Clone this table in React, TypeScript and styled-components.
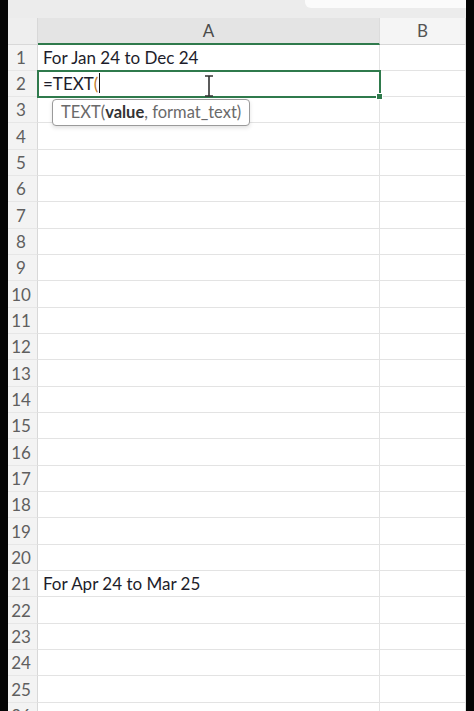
import styled, { createGlobalStyle } from "styled-components";

const GlobalStyle = createGlobalStyle`
  html, body {
    margin: 0;
    padding: 0;
    background: #000;
  }
`;

const ROW_H = 26.33;
const rows = Array.from({ length: 26 }, (_, i) => i + 1);

const Frame = styled.div`
  display: flex;
  width: 474px;
  height: 711px;
  overflow: hidden;
  background: #000;
  font-family: Lato, "Open Sans", sans-serif;
`;

const SideBar = styled.div`
  width: 8px;
  flex: none;
  background: #050505;
`;

const Main = styled.div`
  flex: 1;
  display: flex;
  flex-direction: column;
  background: #fff;
  overflow: hidden;
`;

const TopStrip = styled.div`
  height: 18px;
  flex: none;
  background: #ececec;
  display: flex;
  justify-content: flex-end;
`;

const Tab = styled.div`
  width: 161px;
  height: 8px;
  background: #fbfbfb;
  border-bottom-left-radius: 6px;
`;

const Grid = styled.div`
  display: grid;
  grid-template-columns: 30px 342px 86px;
  grid-auto-rows: ${ROW_H}px;
  grid-template-rows: 26.5px;
`;

const Corner = styled.div`
  background: #eeeeee;
  border-right: 1px solid #d8d8d8;
  border-bottom: 1px solid #d8d8d8;
`;

const ColHead = styled.div<{ $active?: boolean }>`
  display: flex;
  align-items: center;
  justify-content: center;
  background: ${(p) => (p.$active ? "#e4e4e4" : "#f5f5f5")};
  color: ${(p) => (p.$active ? "#4a4a4a" : "#555")};
  font-size: 17px;
  border-right: 1px solid #dcdcdc;
  border-bottom: ${(p) => (p.$active ? "2px solid #2f7a4c" : "1px solid #d8d8d8")};
  box-sizing: border-box;
`;

const RowHead = styled.div`
  display: flex;
  align-items: center;
  justify-content: center;
  padding-right: 3px;
  background: #f3f3f3;
  color: #5f5f5f;
  font-size: 17px;
  border-right: 1px solid #d8d8d8;
  border-bottom: 1px solid #e6e6e6;
  box-sizing: border-box;
`;

const Cell = styled.div<{ $selected?: boolean }>`
  position: relative;
  display: flex;
  align-items: center;
  padding-left: 5px;
  font-size: 17px;
  color: #1d1d2b;
  white-space: nowrap;
  border-right: 1px solid #e3e3e3;
  border-bottom: 1px solid #e3e3e3;
  box-sizing: border-box;
  ${(p) =>
    p.$selected &&
    `
    outline: 2px solid #2f7a4c;
    outline-offset: -1px;
    z-index: 2;
  `}
`;

const Paren = styled.span`
  color: #c07a2a;
`;

const Caret = styled.span`
  display: inline-block;
  width: 1px;
  height: 20px;
  background: #111;
  margin-left: 1px;
`;

const FillHandle = styled.span`
  position: absolute;
  right: -4px;
  bottom: -4px;
  width: 5px;
  height: 5px;
  background: #2f7a4c;
  border: 1px solid #fff;
`;

const IBeam = styled.svg`
  position: absolute;
  left: 166px;
  top: 4px;
  z-index: 4;
`;

const Tooltip = styled.div`
  position: absolute;
  left: 14px;
  top: 28px;
  z-index: 3;
  padding: 2px 8px 3px;
  background: #fff;
  border: 1px solid #9a9a9a;
  border-radius: 4px;
  box-shadow: 0 2px 4px rgba(0, 0, 0, 0.12);
  color: #6a6a6a;
  font-size: 16.5px;
  white-space: nowrap;
  b {
    color: #333;
    font-weight: 700;
  }
`;

const texts: Record<number, string> = {
  1: "For Jan 24 to Dec 24",
  21: "For Apr 24 to Mar 25",
};

export default function App() {
  return (
    <>
      <GlobalStyle />
      <Frame>
        <SideBar />
        <Main>
          <TopStrip>
            <Tab />
          </TopStrip>
          <Grid>
            <Corner />
            <ColHead $active>A</ColHead>
            <ColHead>B</ColHead>
            {rows.map((r) => (
              <Row key={r} n={r} />
            ))}
          </Grid>
        </Main>
        <SideBar />
      </Frame>
    </>
  );
}

function Row({ n }: { n: number }) {
  if (n === 2) {
    return (
      <>
        <RowHead>{n}</RowHead>
        <Cell $selected>
          =TEXT<Paren>(</Paren>
          <Caret />
          <IBeam width="10" height="22" viewBox="0 0 10 22">
            <path d="M1 1h8M5 1v20M1 21h8" stroke="#333" strokeWidth="1.6" fill="none" />
          </IBeam>
          <Tooltip>
            TEXT(<b>value</b>, format_text)
          </Tooltip>
          <FillHandle />
        </Cell>
        <Cell />
      </>
    );
  }
  return (
    <>
      <RowHead>{n}</RowHead>
      <Cell>{texts[n]}</Cell>
      <Cell />
    </>
  );
}
